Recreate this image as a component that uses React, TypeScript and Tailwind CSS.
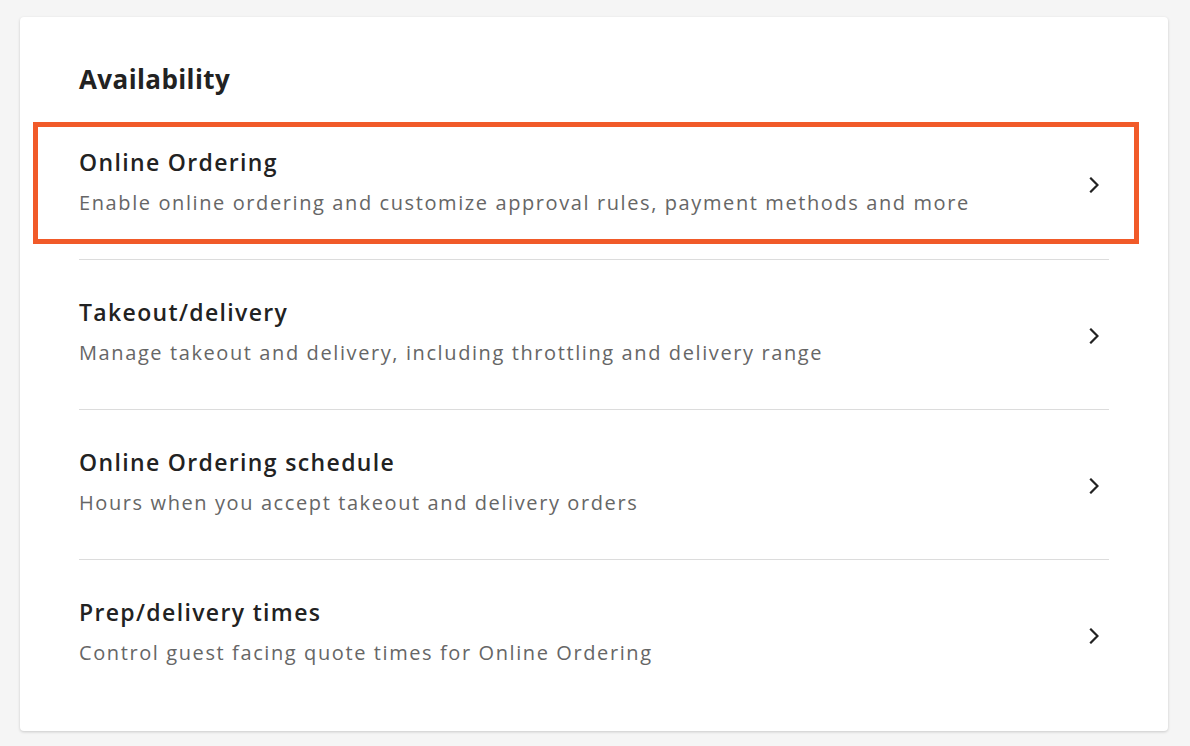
import React from "react";

const rows = [
  {
    title: "Online Ordering",
    desc: "Enable online ordering and customize approval rules, payment methods and more",
  },
  {
    title: "Takeout/delivery",
    desc: "Manage takeout and delivery, including throttling and delivery range",
  },
  {
    title: "Online Ordering schedule",
    desc: "Hours when you accept takeout and delivery orders",
  },
  {
    title: "Prep/delivery times",
    desc: "Control guest facing quote times for Online Ordering",
  },
];

function Chevron() {
  return (
    <svg width="10" height="16" viewBox="0 0 10 16" fill="none">
      <path d="M2 1.5 L8.5 8 L2 14.5" stroke="#222" strokeWidth="2.2" strokeLinecap="square" />
    </svg>
  );
}

export default function App() {
  return (
    <div className="h-[746px] w-[1190px] bg-[#f5f5f5] pt-[17px] pl-[20px]" style={{ fontFamily: "'Open Sans', Lato, sans-serif" }}>
      <div className="relative w-[1148px] h-[714px] bg-white rounded-[4px] shadow-[0_1px_3px_rgba(0,0,0,0.18)] px-[59px]">
        <h2 className="pt-[45px] text-[26px] leading-[34px] font-bold text-[#222] tracking-[0.4px]">Availability</h2>
        <div className="mt-[13px]">
          {rows.map((r, i) => (
            <div
              key={r.title}
              className={`flex items-center justify-between h-[150px] ${i > 0 ? "border-t border-[#dcdcdc]" : ""}`}
            >
              <div className="flex flex-col -mt-[4px]">
                <div className="text-[23px] leading-[30px] font-semibold text-[#222] tracking-[1.35px]">{r.title}</div>
                <div className="mt-[11px] text-[20px] leading-[30px] text-[#666] tracking-[1.6px]">{r.desc}</div>
              </div>
              <div className="mr-[10px] mt-[2px]">
                <Chevron />
              </div>
            </div>
          ))}
        </div>
        <div className="absolute left-[13px] top-[105px] w-[1106px] h-[122px] border-[5px] border-[#f15a29] pointer-events-none" />
      </div>
    </div>
  );
}
